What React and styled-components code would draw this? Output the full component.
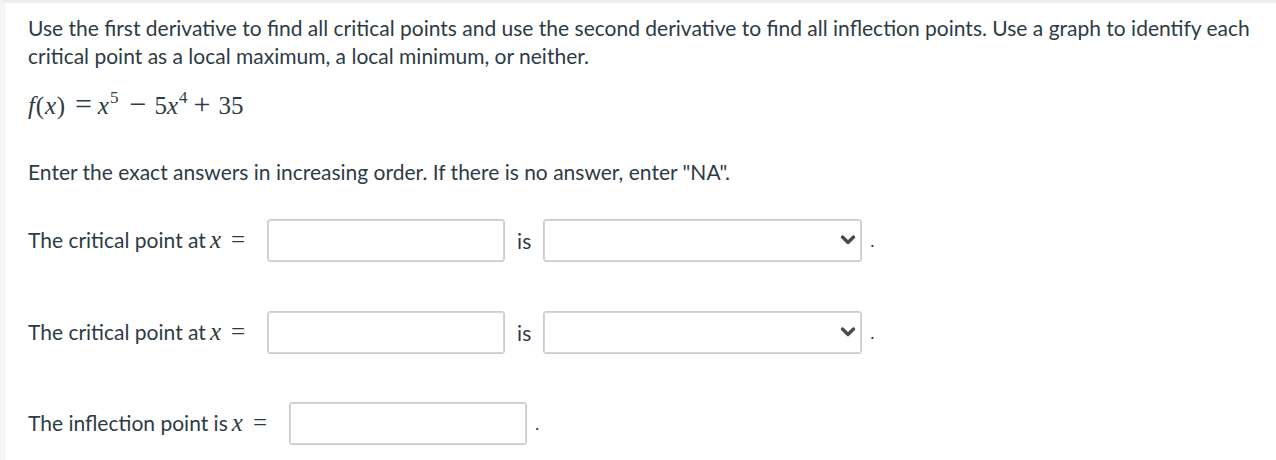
import React from "react";
import styled, { createGlobalStyle } from "styled-components";

const textColor = "#2d3b45";
const mathFont = `"Liberation Serif", "DejaVu Serif", serif`;

const GlobalStyle = createGlobalStyle`
  html, body {
    margin: 0;
    padding: 0;
    background: #fff;
  }
  body {
    font-family: Lato, "Open Sans", sans-serif;
    color: ${textColor};
  }
`;

const Page = styled.div`
  width: 1276px;
  height: 460px;
  box-sizing: border-box;
  border-top: 3px solid #ededed;
  border-left: 6px solid #f6f6f6;
  padding: 11px 0 0 22px;
  overflow: hidden;
`;

const Paragraph = styled.p`
  margin: 0;
  font-size: 21px;
  line-height: 28px;
`;

const MathLine = styled.div`
  margin-top: 19px;
  height: 28px;
  font-family: ${mathFont};
  font-size: 25px;
  line-height: 28px;
  white-space: nowrap;
`;

const FnName = styled.span`
  letter-spacing: 0.8px;
`;

const Var = styled.span`
  font-style: italic;
`;

const Sup = styled.span`
  display: inline-block;
  font-size: 17px;
  line-height: 1;
  vertical-align: 11px;
  margin-left: 1px;
`;

const Op = styled.span`
  display: inline-block;
  font-size: 30px;
  line-height: 1;
  margin: 0 ${(p) => p.$right}px 0 ${(p) => p.$left}px;
`;

const Instructions = styled(Paragraph)`
  margin-top: 41px;
`;

const AnswerRow = styled.div`
  display: flex;
  align-items: center;
  height: 42px;
  margin-top: ${(p) => p.$top}px;
  font-size: 21px;
`;

const Label = styled.span`
  margin-right: 22px;
  white-space: nowrap;
`;

const MathX = styled.span`
  font-family: ${mathFont};
  font-style: italic;
  font-size: 25px;
  margin-left: 4px;
`;

const MathEq = styled.span`
  font-family: ${mathFont};
  font-size: 25px;
  margin-left: 10px;
`;

const TextBox = styled.input`
  box-sizing: border-box;
  width: 238px;
  height: 43px;
  border: 1px solid #c7cdd1;
  box-shadow: inset 0 0 0 1px #d6d6d6;
  border-radius: 3px;
  background: #fff;
  margin: 0;
  padding: 0 8px;
  font-size: 18px;
`;

const IsWord = styled.span`
  margin: 0 12px;
`;

const SelectBox = styled.div`
  box-sizing: border-box;
  width: 319px;
  height: 43px;
  border: 1px solid #c7cdd1;
  box-shadow: inset 0 0 0 1px #d6d6d6;
  border-radius: 3px;
  background: #fff;
  display: flex;
  align-items: center;
  justify-content: flex-end;
  padding-right: 5px;
`;

const Period = styled.span`
  margin-left: 8px;
  font-size: 18px;
`;

function Chevron() {
  return (
    <svg width="16" height="12" viewBox="0 0 16 12">
      <path
        d="M2.5 3 L8 8.5 L13.5 3"
        fill="none"
        stroke="#4a4a4a"
        strokeWidth="3.4"
        strokeLinecap="round"
        strokeLinejoin="round"
      />
    </svg>
  );
}

function CriticalRow({ top }) {
  return (
    <AnswerRow $top={top}>
      <Label>
        The critical point at<MathX>x</MathX>
        <MathEq>=</MathEq>
      </Label>
      <TextBox type="text" />
      <IsWord>is</IsWord>
      <SelectBox>
        <Chevron />
      </SelectBox>
      <Period>.</Period>
    </AnswerRow>
  );
}

export default function App() {
  return (
    <>
      <GlobalStyle />
      <Page>
        <Paragraph>
          Use the first derivative to find all critical points and use the
          second derivative to find all inflection points. Use a graph to
          identify each critical point as a local maximum, a local minimum, or
          neither.
        </Paragraph>
        <MathLine>
          <FnName>
            <Var>f</Var>(<Var>x</Var>)
          </FnName>
          <Op $left={9} $right={6}>=</Op>
          <Var>x</Var>
          <Sup>5</Sup>
          <Op $left={11} $right={8}>−</Op>5<Var>x</Var>
          <Sup>4</Sup>
          <Op $left={6} $right={8}>+</Op>35
        </MathLine>
        <Instructions>
          Enter the exact answers in increasing order. If there is no answer,
          enter "NA".
        </Instructions>
        <CriticalRow top={33} />
        <CriticalRow top={50} />
        <AnswerRow $top={49}>
          <Label>
            The inflection point is<MathX>x</MathX>
            <MathEq>=</MathEq>
          </Label>
          <TextBox type="text" />
          <Period>.</Period>
        </AnswerRow>
      </Page>
    </>
  );
}
